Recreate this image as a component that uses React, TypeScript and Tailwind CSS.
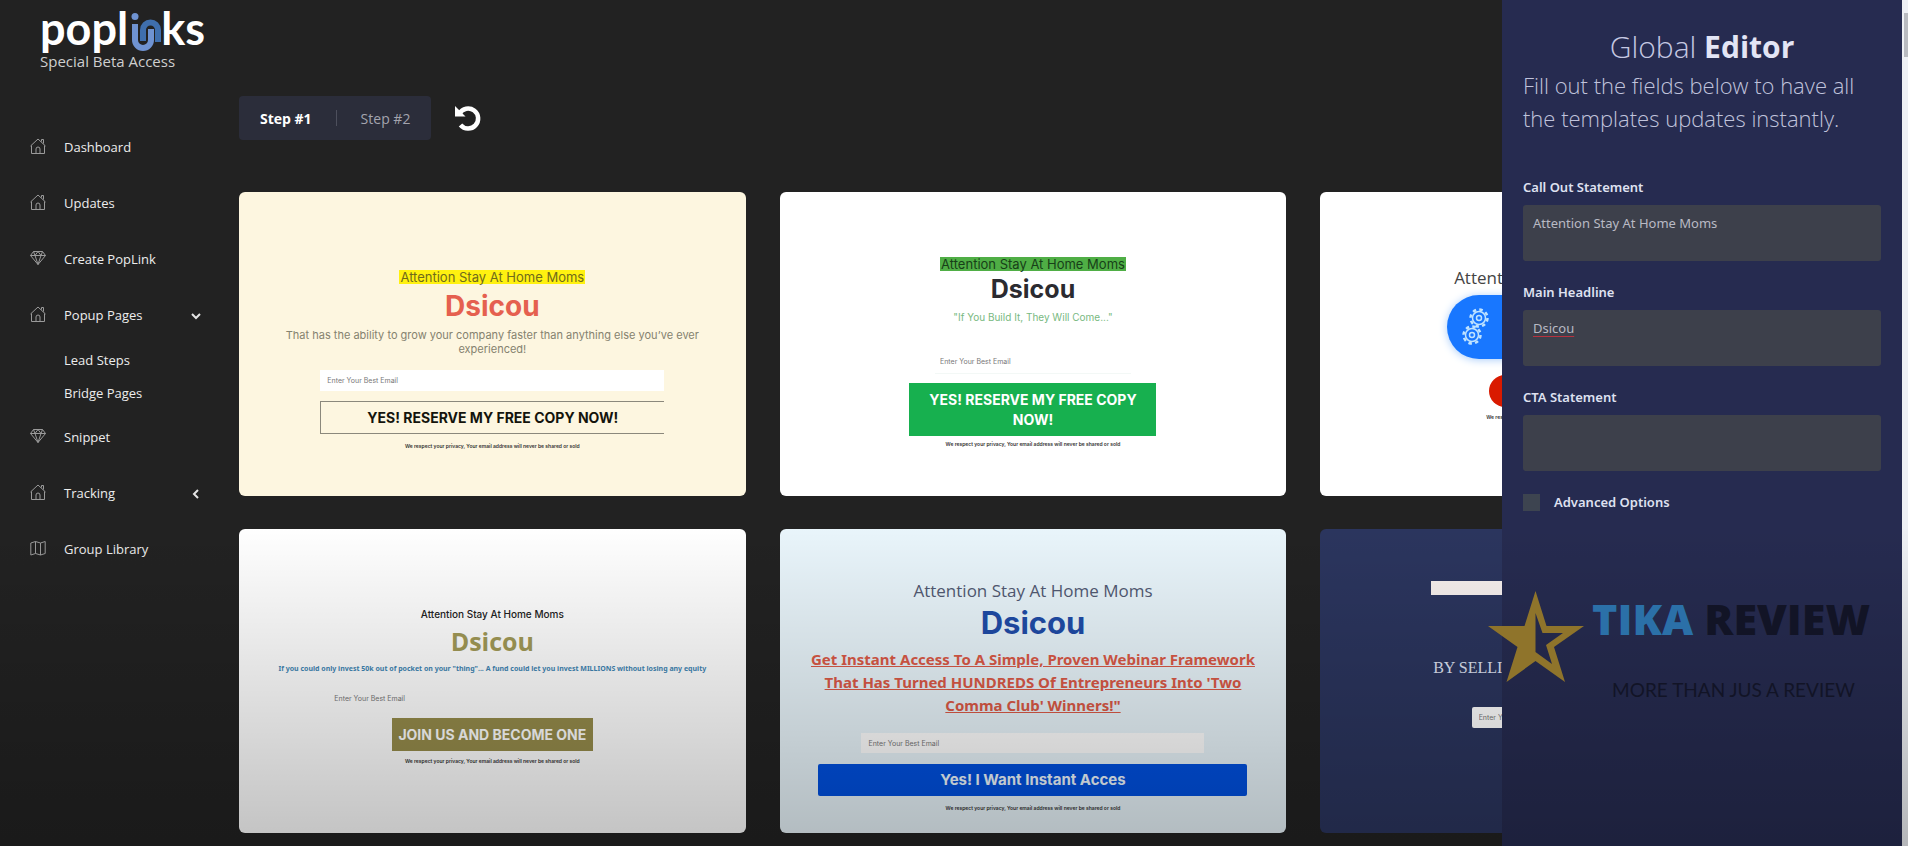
import type { ReactNode } from 'react';

const MOMS = 'Attention Stay At Home Moms';
const PRIVACY = 'We respect your privacy, Your email address will never be shared or sold';

type IconName = 'home' | 'diamond' | 'map';

interface NavItem {
  label: string;
  icon: IconName;
  arrow?: 'down' | 'left';
  children?: string[];
}

const NAV: NavItem[] = [
  { label: 'Dashboard', icon: 'home' },
  { label: 'Updates', icon: 'home' },
  { label: 'Create PopLink', icon: 'diamond' },
  { label: 'Popup Pages', icon: 'home', arrow: 'down', children: ['Lead Steps', 'Bridge Pages'] },
  { label: 'Snippet', icon: 'diamond' },
  { label: 'Tracking', icon: 'home', arrow: 'left' },
  { label: 'Group Library', icon: 'map' },
];

const NavIcon = ({ name }: { name: IconName }) => (
  <svg viewBox="0 0 16 16" className="mb-1 size-4 shrink-0" fill="none" stroke="#9a9a9a" strokeWidth="1">
    {name === 'home' && (
      <>
        <path d="M.5 8 8 1l7.500 7M1.500 7.500v8h13v-8M11.500 3.500v-2h2v4" />
        <path d="M6 15.500v-4.500a2 2 0 0 1 4 0v4.500" />
      </>
    )}
    {name === 'diamond' && (
      <path d="M3.500 1.500h9l3 4L8 14.500.5 5.500zM.5 5.500h15M3.500 1.500l1.500 4 3 9 3-9 1.500-4M5 5.500l3-4 3 4" />
    )}
    {name === 'map' && (
      <path d="M.8 3 5.500 1.500l5 1.500 4.700-1.500v12l-4.700 1.500-5-1.500L.8 15zM5.500 1.500v12M10.500 3v12" />
    )}
  </svg>
);

const Arrow = ({ dir }: { dir: 'down' | 'left' }) => (
  <svg viewBox="0 0 10 10" className="ml-auto size-[10px]" fill="none" stroke="#e5e5e5" strokeWidth="2">
    {dir === 'down' ? <path d="M1 3l4 4 4-4" /> : <path d="M7 1L3 5l4 4" />}
  </svg>
);

const Logo = () => (
  <div className="pt-[3px] pl-10">
    <div className="flex h-[50px] items-start font-['Lato',sans-serif] text-[45px] leading-[50px] font-bold text-white">
      <span>popl</span>
      <svg viewBox="0 0 30 40" className="mt-[9px] ml-[3px] h-10 w-[30px] shrink-0" fill="none" strokeWidth="6">
        <path d="M12 29V18a7.500 7.500 0 0 1 15 0v12" stroke="#3f6fae" />
        <path d="M4 12v16a8 8 0 0 0 16 0V17" stroke="#6f93d2" />
        <circle cx="4" cy="4.500" r="3.500" fill="#6f93d2" />
      </svg>
      <span>ks</span>
    </div>
    <p className="text-[15px] leading-4 text-[#cfcfcf]">Special Beta Access</p>
  </div>
);

const Sidebar = () => (
  <aside className="w-[239px] shrink-0">
    <Logo />
    <nav className="mt-[51px] text-[13px] font-medium text-[#ededed]">
      {NAV.map((item) => (
        <div key={item.label}>
          <a href="#" className="flex h-14 items-center pr-[38px] pl-[30px]">
            <NavIcon name={item.icon} />
            <span className="ml-[18px]">{item.label}</span>
            {item.arrow && <Arrow dir={item.arrow} />}
          </a>
          {item.children?.map((child) => (
            <a key={child} href="#" className="flex h-[33px] items-center pl-16">
              {child}
            </a>
          ))}
        </div>
      ))}
    </nav>
  </aside>
);

const Card = ({ className, children }: { className: string; children: ReactNode }) => (
  <article className={`flex h-[304px] flex-col items-center overflow-hidden rounded-md text-center ${className}`}>
    {children}
  </article>
);

const EmailInput = ({ className }: { className: string }) => (
  <input
    type="email"
    aria-label="Email"
    placeholder="Enter Your Best Email"
    className={`shrink-0 text-[7px] outline-none placeholder:text-[#777] ${className}`}
  />
);

const Privacy = ({ className = '' }: { className?: string }) => (
  <p className={`text-[5px] leading-2 font-semibold whitespace-nowrap text-[#333] ${className}`}>{PRIVACY}</p>
);

const Gears = () => (
  <svg viewBox="0 0 30 40" className="h-10 w-[30px]" fill="none" stroke="#bfe3ff" strokeWidth="1.500">
    <circle cx="18" cy="11" r="6.500" />
    <circle cx="18" cy="11" r="8.500" strokeDasharray="3.500 3.180" strokeWidth="2.500" />
    <circle cx="18" cy="11" r="2.500" />
    <circle cx="11" cy="28" r="6.500" />
    <circle cx="11" cy="28" r="8.500" strokeDasharray="3.500 3.180" strokeWidth="2.500" />
    <circle cx="11" cy="28" r="2.500" />
  </svg>
);

const Templates = () => (
  <div className="mt-[52px] grid grid-cols-3 gap-x-[34px] gap-y-[33px] font-['Inter',sans-serif]">
    <Card className="bg-[#fdf6e0] pt-[78px]">
      <p className="bg-[#fff110] px-px text-[13px] leading-[14px] text-[#6f6a1c]">{MOMS}</p>
      <h2 className="mt-2 text-[28px] leading-7 font-bold text-[#e5604f]">Dsicou</h2>
      <p className="mt-2 w-[430px] text-[11px] leading-[14px] text-[#85826f]">
        That has the ability to grow your company faster than anything else you’ve ever experienced!
      </p>
      <EmailInput className="mt-[14px] h-[21px] w-[344px] bg-white px-[7px]" />
      <button className="mt-[10px] h-[33px] w-[344px] shrink-0 border border-r-0 border-[#8b887c] text-[14px] font-bold text-[#14140c]">
        YES! RESERVE MY FREE COPY NOW!
      </button>
      <Privacy className="mt-2" />
    </Card>

    <Card className="bg-white pt-[65px]">
      <p className="bg-[#4fae45] px-px text-[13px] leading-[14px] text-[#173f18]">{MOMS}</p>
      <h2 className="mt-1 text-[25px] leading-7 font-bold text-[#2b2b30]">Dsicou</h2>
      <p className="mt-[6px] text-[10px] leading-4 text-[#78b97f]">"If You Build It, They Will Come..."</p>
      <EmailInput className="mt-[25px] h-6 w-[196px] border-b border-[#f3f8f6] px-[5px]" />
      <button className="mt-[9px] h-[53px] w-[247px] shrink-0 bg-[#17b04f] px-4 text-[14px] leading-5 font-bold text-white">
        YES! RESERVE MY FREE COPY NOW!
      </button>
      <Privacy className="mt-1" />
    </Card>

    <Card className="bg-white pt-[74px]">
      <p className="font-['Open_Sans',sans-serif] text-[17px] leading-6 text-[#444]">{MOMS}</p>
      <div className="mt-[5px] flex h-16 w-[253px] shrink-0 items-center gap-4 rounded-full bg-[#1877ff] pl-[14px] shadow-[0_1px_8px_#a9cdfa]">
        <Gears />
        <h2 className="text-[28px] font-bold text-[#16284f]">Dsicou</h2>
      </div>
      <button className="mt-4 h-8 w-[170px] shrink-0 rounded-full bg-[#d91a00] text-[14px] font-bold text-white">
        GET ACCESS
      </button>
      <Privacy className="mt-[6px]" />
    </Card>

    <Card className="bg-white pt-[77px]">
      <p className="text-[10px] leading-4 font-medium text-[#222]">{MOMS}</p>
      <h2 className="mt-[5px] font-['Open_Sans',sans-serif] text-[25px] leading-7 font-bold text-[#a29a57]">Dsicou</h2>
      <p className="mt-[6px] font-['Noto_Sans',sans-serif] text-[7px] leading-4 font-bold whitespace-nowrap text-[#3f86b4]">
        If you could only invest 50k out of pocket on your "thing"... A fund could let you invest MILLIONS without
        losing any equity
      </p>
      <EmailInput className="mt-[9px] h-6 w-[330px] px-[7px]" />
      <button className="mt-2 h-[33px] w-[201px] shrink-0 bg-[#968c4b] text-[14px] font-bold whitespace-nowrap text-white">
        JOIN US AND BECOME ONE
      </button>
      <Privacy className="mt-[6px]" />
    </Card>

    <Card className="bg-[#e9f5fb] pt-[50px]">
      <p className="font-['Open_Sans',sans-serif] text-[17px] leading-6 text-[#525a73]">{MOMS}</p>
      <h2 className="mt-[2px] text-[31px] leading-9 font-bold text-[#1f4ca8]">Dsicou</h2>
      <p className="mt-[7px] w-[470px] font-['Noto_Sans',sans-serif] text-[15px] leading-[23px] font-bold text-[#dc5a47] underline">
        Get Instant Access To A Simple, Proven Webinar Framework That Has Turned HUNDREDS Of Entrepreneurs Into 'Two
        Comma Club' Winners!"
      </p>
      <EmailInput className="mt-4 h-5 w-[343px] bg-white px-[7px]" />
      <button className="mt-[11px] h-8 w-[429px] shrink-0 rounded-xs bg-[#0050e0] text-[15px] font-bold text-[#eef8ff]">
        Yes! I Want Instant Acces
      </button>
      <Privacy className="mt-2" />
    </Card>

    <Card className="bg-[#2b355e] pt-[52px]">
      <div className="h-[14px] w-[285px] shrink-0 bg-[#f7f0ee]" />
      <p className="mt-[61px] w-[281px] text-left font-['Liberation_Serif',serif] text-[16px] leading-6 whitespace-nowrap text-[#dfe3f2]">
        BY SELLING YOUR OWN OFFER
      </p>
      <EmailInput className="mt-[27px] h-[21px] w-[204px] rounded-xs bg-white px-[7px]" />
    </Card>
  </div>
);

const FIELDS = [
  { id: 'callout', label: 'Call Out Statement', value: MOMS },
  { id: 'headline', label: 'Main Headline', value: 'Dsicou', misspelt: true },
  { id: 'cta', label: 'CTA Statement', value: '' },
];

const EditorPanel = () => (
  <aside className="absolute inset-y-0 right-[6px] w-[400px] bg-[#262b50] px-[21px] pt-[26px] text-[#dfe1f0]">
    <h1 className="text-center text-[30px] leading-[42px] font-light text-[#c5c8e2]">
      Global <b className="font-bold text-[#e3e5f5]">Editor</b>
    </h1>
    <p className="pt-px text-[22px] leading-[33px] font-light text-[#c0c3dc]">
      Fill out the fields below to have all the templates updates instantly.
    </p>
    <form className="mt-[42px] font-['Noto_Sans',sans-serif] text-[13px] leading-5">
      {FIELDS.map((field) => (
        <div key={field.id} className="mb-[21px]">
          <label htmlFor={field.id} className="block h-7 font-semibold">
            {field.label}
          </label>
          <textarea
            id={field.id}
            defaultValue={field.value}
            spellCheck={false}
            className={`block h-14 w-full resize-none rounded-[3px] bg-[#3d404b] px-[10px] py-2 text-[#b9bac4] outline-none ${
              field.misspelt ? 'underline decoration-[#b8323f] underline-offset-3' : ''
            }`}
          />
        </div>
      ))}
      <label className="flex items-center gap-[14px] font-semibold">
        <input type="checkbox" className="size-[17px] appearance-none bg-[#3d4450]" />
        Advanced Options
      </label>
    </form>
  </aside>
);

const Watermark = () => (
  <div className="pointer-events-none absolute top-[588px] right-[33px] flex items-start">
    <svg viewBox="0 0 96 92" className="mt-[3px] h-[92px] w-24" fill="#8f742b">
      <path
        fillRule="evenodd"
        d="M47.500 0 58.500 35H96L66 56 77 91 47.500 70 18.500 91 29.500 56 0 35H36.500zM47.500 22V61L64 73 58 54 75 42H54.500z"
      />
    </svg>
    <div className="ml-2 w-[283px]">
      <div className="text-[43px] leading-[62px] font-extrabold whitespace-nowrap">
        <span className="text-[#2b70a8]">TIKA</span> <span className="text-[#121426]">REVIEW</span>
      </div>
      <p className="mt-7 text-center font-['Lato',sans-serif] text-[19px] leading-6 text-[#121426]">
        MORE THAN JUS A REVIEW
      </p>
    </div>
  </div>
);

export default function App() {
  return (
    <div className="relative h-screen overflow-hidden bg-[#222] font-['Open_Sans',sans-serif]">
      <div className="flex">
        <Sidebar />
        <main className="min-w-0 flex-1 pt-24 pr-[81px]">
          <div className="flex h-11 items-center">
            <div className="flex h-full items-center rounded bg-[#2b2d3a] px-[21px] text-[14px]">
              <button className="font-bold text-white">Step #1</button>
              <span className="mx-6 h-4 w-px bg-[#4d4f5c]" />
              <button className="text-[#a3a4ae]">Step #2</button>
            </div>
            <button aria-label="Reset" className="ml-6">
              <svg viewBox="0 0 26 26" className="size-[26px]" fill="none">
                <path d="M4.500 8.500A10 10 0 1 1 5.500 20" stroke="#fff" strokeWidth="4.500" />
                <path d="M0 1v10.500h10.500z" fill="#fff" />
              </svg>
            </button>
          </div>
          <Templates />
        </main>
      </div>
      <EditorPanel />
      <div className="absolute inset-y-0 right-0 w-[6px] bg-[#eef0f4] pt-[13px] pl-[2px]">
        <div className="h-11 bg-[#b9bbc0]" />
      </div>
      <div className="pointer-events-none absolute inset-x-0 bottom-0 h-[320px] bg-linear-to-b from-transparent to-black/24" />
      <Watermark />
    </div>
  );
}
